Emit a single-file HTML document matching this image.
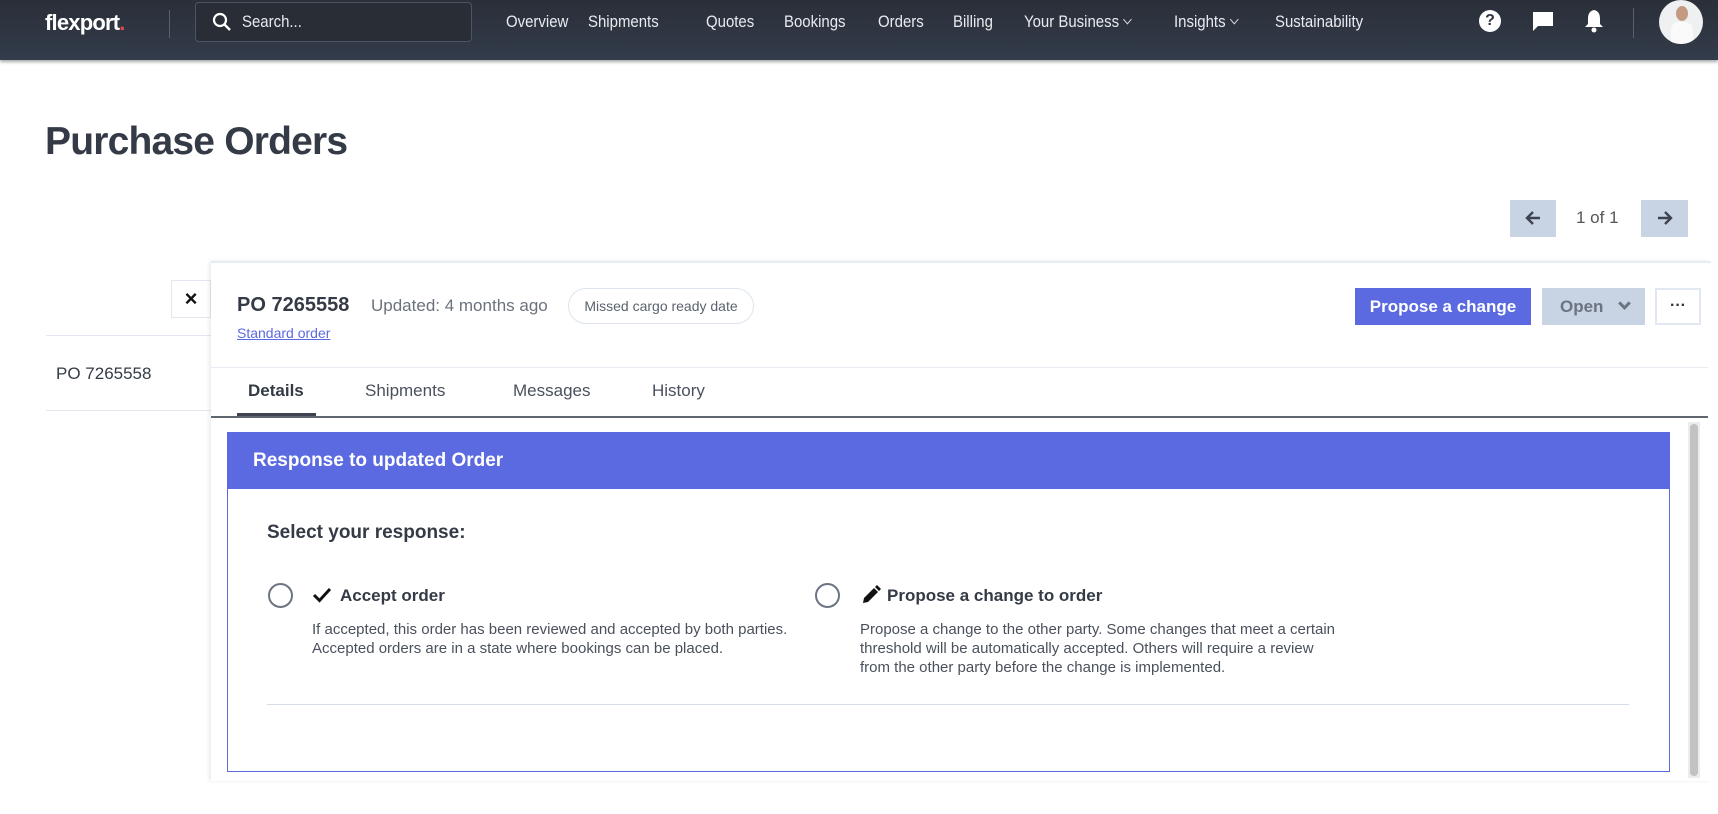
<!DOCTYPE html>
<html><head><meta charset="utf-8"><style>
*{box-sizing:border-box;margin:0;padding:0}
body{width:1718px;height:814px;overflow:hidden;background:#fff;font-family:"Liberation Sans",sans-serif;color:#343b46;position:relative}
.a{position:absolute;white-space:nowrap}
.nav{position:absolute;left:0;top:0;width:1718px;height:60px;background:linear-gradient(#2a2f38,#333c4b);box-shadow:0 2px 3px rgba(0,0,0,.35)}
.nav .l{color:#e8ebef;font-size:17px;top:12px;transform:scaleX(0.88);transform-origin:left}
.chev{display:inline-block;width:7px;height:7px;border-right:1.6px solid #ddd;border-bottom:1.6px solid #ddd;transform:rotate(45deg);margin-left:6px;position:relative;top:-4px}
</style></head><body>
<div class="nav">
 <div class="a" style="left:45px;top:10px;color:#fff;font-weight:bold;font-size:22px;letter-spacing:-0.8px">flexport<span style="color:#e5484d">.</span></div>
 <div class="a" style="left:169px;top:10px;width:1px;height:28px;background:#59606b"></div>
 <div class="a" style="left:195px;top:2px;width:277px;height:40px;border:1px solid #4d5563;border-radius:4px;background:#282d36"></div>
 <svg class="a" style="left:212px;top:12px" width="20" height="20" viewBox="0 0 20 20"><circle cx="8" cy="8" r="6" fill="none" stroke="#fff" stroke-width="2.2"/><path d="M12.5 12.5L18 18" stroke="#fff" stroke-width="2.4"/></svg>
 <div class="a l" style="left:242px">Search...</div>
 <div class="a l" style="left:506px">Overview</div>
 <div class="a l" style="left:588px">Shipments</div>
 <div class="a l" style="left:706px">Quotes</div>
 <div class="a l" style="left:784px">Bookings</div>
 <div class="a l" style="left:878px">Orders</div>
 <div class="a l" style="left:953px">Billing</div>
 <div class="a l" style="left:1024px">Your Business<span class="chev"></span></div>
 <div class="a l" style="left:1174px">Insights<span class="chev"></span></div>
 <div class="a l" style="left:1275px">Sustainability</div>
 <div class="a" style="left:1479px;top:10px;width:22px;height:22px;border-radius:50%;background:#fff;color:#2e3440;font-weight:bold;font-size:16px;text-align:center;line-height:22px">?</div>
 <svg class="a" style="left:1532px;top:11px" width="22" height="22" viewBox="0 0 22 22"><path d="M1 1H21V15H6L1 20Z" fill="#fff"/></svg>
 <svg class="a" style="left:1583px;top:9px" width="22" height="24" viewBox="0 0 22 24"><path d="M11 1C6 2 5 6 5 10V15L2 18H20L17 15V10C17 6 16 2 11 1Z" fill="#fff"/><circle cx="11" cy="21" r="2.5" fill="#fff"/></svg>
 <div class="a" style="left:1633px;top:8px;width:1px;height:30px;background:#59606b"></div>
 <div class="a" style="left:1659px;top:0px;width:44px;height:44px;border-radius:50%;background:#eef0f2;overflow:hidden">
  <div class="a" style="left:17px;top:6px;width:12px;height:15px;border-radius:50%;background:#c49a80"></div>
  <div class="a" style="left:12px;top:22px;width:22px;height:24px;border-radius:8px 8px 0 0;background:#fafafa"></div>
 </div>
</div>

<div class="a" style="left:45px;top:120px;font-size:39px;font-weight:bold;color:#343b46;letter-spacing:-0.8px">Purchase Orders</div>

<div class="a" style="left:1510px;top:200px;width:46px;height:37px;background:#c8d3e4"></div>
<svg class="a" style="left:1524px;top:210px" width="18" height="16" viewBox="0 0 18 16"><path d="M16 8H3M9 2L3 8L9 14" fill="none" stroke="#3d4450" stroke-width="2.4"/></svg>
<div class="a" style="left:1576px;top:208px;font-size:17px;color:#555">1 of 1</div>
<div class="a" style="left:1641px;top:200px;width:47px;height:37px;background:#c8d3e4"></div>
<svg class="a" style="left:1656px;top:210px" width="18" height="16" viewBox="0 0 18 16"><path d="M2 8H15M9 2L15 8L9 14" fill="none" stroke="#3d4450" stroke-width="2.4"/></svg>

<div class="a" style="left:46px;top:335px;width:166px;height:76px;border-top:1px solid #e3e8f0;border-bottom:1px solid #e3e8f0;background:#fff"></div>
<div class="a" style="left:56px;top:364px;font-size:17px;color:#343b46">PO 7265558</div>
<div class="a" style="left:171px;top:280px;width:40px;height:38px;border:1px solid #e3e8f0;background:#fff;font-size:22px;font-weight:bold;text-align:center;line-height:36px;color:#111">×</div>

<div class="a" style="left:211px;top:261px;width:1500px;height:520px;border-top:2px solid #e7ecf3;box-shadow:-2px 0 4px rgba(0,0,0,.08);background:#fff"></div>
<div class="a" style="left:237px;top:294px;font-size:20px;font-weight:bold;color:#343b46">PO 7265558</div>
<div class="a" style="left:371px;top:296px;font-size:17px;color:#6b727c">Updated: 4 months ago</div>
<div class="a" style="left:568px;top:288px;width:186px;height:36px;border:1px solid #dde4ee;border-radius:18px;font-size:14px;color:#5b636e;text-align:center;line-height:34px">Missed cargo ready date</div>
<div class="a" style="left:237px;top:325px;font-size:14px;color:#5b6ae0;text-decoration:underline">Standard order</div>
<div class="a" style="left:1355px;top:288px;width:176px;height:37px;background:#5b6ae0;color:#fff;font-weight:bold;font-size:17px;text-align:center;line-height:37px">Propose a change</div>
<div class="a" style="left:1542px;top:288px;width:103px;height:37px;background:#c8d3e4;color:#6b7480;font-weight:bold;font-size:17px;line-height:37px;padding-left:18px">Open <span style="display:inline-block;width:9px;height:9px;border-right:3px solid #6b7480;border-bottom:3px solid #6b7480;transform:rotate(45deg);margin-left:12px;position:relative;top:-4px"></span></div>
<div class="a" style="left:1655px;top:288px;width:46px;height:37px;border:2px solid #e2e8f1;text-align:center;line-height:32px;font-weight:bold;font-size:16px;color:#333">···</div>
<div class="a" style="left:211px;top:367px;width:1497px;height:1px;background:#e7ecf3"></div>

<div class="a" style="left:248px;top:381px;font-size:17px;font-weight:bold;color:#343b46">Details</div>
<div class="a" style="left:365px;top:381px;font-size:17px;color:#4a515c">Shipments</div>
<div class="a" style="left:513px;top:381px;font-size:17px;color:#4a515c">Messages</div>
<div class="a" style="left:652px;top:381px;font-size:17px;color:#4a515c">History</div>
<div class="a" style="left:237px;top:413px;width:79px;height:4px;background:#3d4450"></div>
<div class="a" style="left:211px;top:416px;width:1497px;height:2px;background:#5f6670"></div>

<div class="a" style="left:1688px;top:422px;width:12px;height:356px;background:#ececec"></div>
<div class="a" style="left:1690px;top:424px;width:8px;height:352px;border-radius:4px;background:#c2c2c2"></div>

<div class="a" style="left:227px;top:432px;width:1443px;height:340px;border:1px solid #5b6ae0"></div>
<div class="a" style="left:227px;top:432px;width:1443px;height:57px;background:#5b6ae0"></div>
<div class="a" style="left:253px;top:450px;font-size:19px;font-weight:bold;color:#fff">Response to updated Order</div>
<div class="a" style="left:267px;top:522px;font-size:19px;font-weight:bold;color:#343b46">Select your response:</div>

<div class="a" style="left:268px;top:583px;width:25px;height:25px;border-radius:50%;border:2px solid #6b7480"></div>
<svg class="a" style="left:312px;top:587px" width="20" height="16" viewBox="0 0 20 16"><path d="M2 8L7.5 13.5L18 2" fill="none" stroke="#111" stroke-width="3"/></svg>
<div class="a" style="left:340px;top:586px;font-size:17px;font-weight:bold;color:#343b46">Accept order</div>
<div class="a" style="left:312px;top:620px;font-size:15px;line-height:19px;color:#4a515c">If accepted, this order has been reviewed and accepted by both parties.<br>Accepted orders are in a state where bookings can be placed.</div>

<div class="a" style="left:815px;top:583px;width:25px;height:25px;border-radius:50%;border:2px solid #6b7480"></div>
<svg class="a" style="left:861px;top:585px" width="20" height="20" viewBox="0 0 20 20"><path d="M2 18L3 13L13 3L17 7L7 17Z" fill="#111"/><path d="M14 2L16 0L20 4L18 6Z" fill="#111"/></svg>
<div class="a" style="left:887px;top:586px;font-size:17px;font-weight:bold;color:#343b46">Propose a change to order</div>
<div class="a" style="left:860px;top:620px;font-size:15px;line-height:19px;color:#4a515c">Propose a change to the other party. Some changes that meet a certain<br>threshold will be automatically accepted. Others will require a review<br>from the other party before the change is implemented.</div>

<div class="a" style="left:267px;top:704px;width:1362px;height:1px;background:#d6dce5"></div>
</body></html>
